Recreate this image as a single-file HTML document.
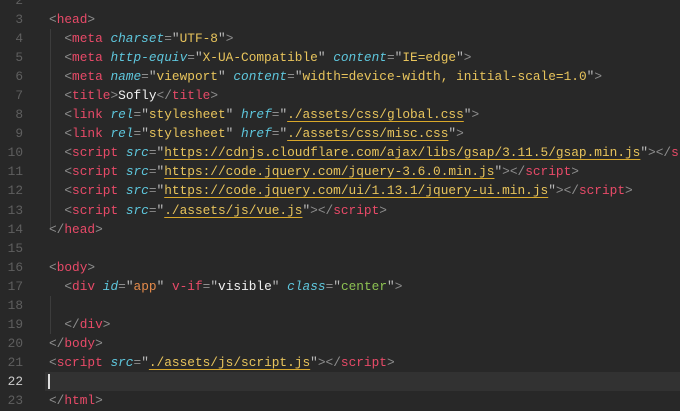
<!DOCTYPE html>
<html><head><meta charset="utf-8"><style>
html,body{margin:0;padding:0;background:#282828;width:680px;height:411px;overflow:hidden}
.wrap{position:absolute;left:0;top:-9px;width:680px;overflow:hidden}
.l{height:19.05px;line-height:19.05px;font-family:"Liberation Mono",monospace;font-size:12.8px;white-space:pre;position:relative;color:#ddd;overflow:hidden}
.n{position:absolute;left:0;width:23px;text-align:right;color:#5f5f5f}
.c{position:absolute;left:49px}
.t{color:#e84a68}.p{color:#8e8e8e}.a{color:#5ec6dc;font-style:italic}.s{color:#e8c45c}.q{color:#bbb}
.u{text-decoration:underline;text-decoration-color:#d9a82a;text-underline-offset:3px}
.o{color:#e48a4a}.w{color:#f2f2f2}.g{color:#8cc152}
.cur{background:#323232}
.guide{position:absolute;left:50px;width:1px;background:#3c3c3c}
</style></head><body>
<div class="guide" style="top:29px;height:200px"></div>
<div class="guide" style="top:296px;height:38px"></div>
<div class="wrap">
<div class="l"><span class="n">2</span></div>
<div class="l"><span class="n">3</span><span class="c"><span class="p">&lt;</span><span class="t">head</span><span class="p">&gt;</span></span></div>
<div class="l"><span class="n">4</span><span class="c">  <span class="p">&lt;</span><span class="t">meta</span> <span class="a">charset</span><span class="p">=</span><span class="q">"</span><span class="s">UTF-8</span><span class="q">"</span><span class="p">&gt;</span></span></div>
<div class="l"><span class="n">5</span><span class="c">  <span class="p">&lt;</span><span class="t">meta</span> <span class="a">http-equiv</span><span class="p">=</span><span class="q">"</span><span class="s">X-UA-Compatible</span><span class="q">"</span> <span class="a">content</span><span class="p">=</span><span class="q">"</span><span class="s">IE=edge</span><span class="q">"</span><span class="p">&gt;</span></span></div>
<div class="l"><span class="n">6</span><span class="c">  <span class="p">&lt;</span><span class="t">meta</span> <span class="a">name</span><span class="p">=</span><span class="q">"</span><span class="s">viewport</span><span class="q">"</span> <span class="a">content</span><span class="p">=</span><span class="q">"</span><span class="s">width=device-width, initial-scale=1.0</span><span class="q">"</span><span class="p">&gt;</span></span></div>
<div class="l"><span class="n">7</span><span class="c">  <span class="p">&lt;</span><span class="t">title</span><span class="p">&gt;</span><span class="w">Sofly</span><span class="p">&lt;/</span><span class="t">title</span><span class="p">&gt;</span></span></div>
<div class="l"><span class="n">8</span><span class="c">  <span class="p">&lt;</span><span class="t">link</span> <span class="a">rel</span><span class="p">=</span><span class="q">"</span><span class="s">stylesheet</span><span class="q">"</span> <span class="a">href</span><span class="p">=</span><span class="q">"</span><span class="s u">./assets/css/global.css</span><span class="q">"</span><span class="p">&gt;</span></span></div>
<div class="l"><span class="n">9</span><span class="c">  <span class="p">&lt;</span><span class="t">link</span> <span class="a">rel</span><span class="p">=</span><span class="q">"</span><span class="s">stylesheet</span><span class="q">"</span> <span class="a">href</span><span class="p">=</span><span class="q">"</span><span class="s u">./assets/css/misc.css</span><span class="q">"</span><span class="p">&gt;</span></span></div>
<div class="l"><span class="n">10</span><span class="c">  <span class="p">&lt;</span><span class="t">script</span> <span class="a">src</span><span class="p">=</span><span class="q">"</span><span class="s u">https://cdnjs.cloudflare.com/ajax/libs/gsap/3.11.5/gsap.min.js</span><span class="q">"</span><span class="p">&gt;&lt;/</span><span class="t">s</span></span></div>
<div class="l"><span class="n">11</span><span class="c">  <span class="p">&lt;</span><span class="t">script</span> <span class="a">src</span><span class="p">=</span><span class="q">"</span><span class="s u">https://code.jquery.com/jquery-3.6.0.min.js</span><span class="q">"</span><span class="p">&gt;&lt;/</span><span class="t">script</span><span class="p">&gt;</span></span></div>
<div class="l"><span class="n">12</span><span class="c">  <span class="p">&lt;</span><span class="t">script</span> <span class="a">src</span><span class="p">=</span><span class="q">"</span><span class="s u">https://code.jquery.com/ui/1.13.1/jquery-ui.min.js</span><span class="q">"</span><span class="p">&gt;&lt;/</span><span class="t">script</span><span class="p">&gt;</span></span></div>
<div class="l"><span class="n">13</span><span class="c">  <span class="p">&lt;</span><span class="t">script</span> <span class="a">src</span><span class="p">=</span><span class="q">"</span><span class="s u">./assets/js/vue.js</span><span class="q">"</span><span class="p">&gt;&lt;/</span><span class="t">script</span><span class="p">&gt;</span></span></div>
<div class="l"><span class="n">14</span><span class="c"><span class="p">&lt;/</span><span class="t">head</span><span class="p">&gt;</span></span></div>
<div class="l"><span class="n">15</span></div>
<div class="l"><span class="n">16</span><span class="c"><span class="p">&lt;</span><span class="t">body</span><span class="p">&gt;</span></span></div>
<div class="l"><span class="n">17</span><span class="c">  <span class="p">&lt;</span><span class="t">div</span> <span class="a">id</span><span class="p">=</span><span class="q">"</span><span class="o">app</span><span class="q">"</span> <span class="t">v-if</span><span class="p">=</span><span class="q">"</span><span class="w">visible</span><span class="q">"</span> <span class="a">class</span><span class="p">=</span><span class="q">"</span><span class="g">center</span><span class="q">"</span><span class="p">&gt;</span></span></div>
<div class="l"><span class="n">18</span></div>
<div class="l"><span class="n">19</span><span class="c">  <span class="p">&lt;/</span><span class="t">div</span><span class="p">&gt;</span></span></div>
<div class="l"><span class="n">20</span><span class="c"><span class="p">&lt;/</span><span class="t">body</span><span class="p">&gt;</span></span></div>
<div class="l"><span class="n">21</span><span class="c"><span class="p">&lt;</span><span class="t">script</span> <span class="a">src</span><span class="p">=</span><span class="q">"</span><span class="s u">./assets/js/script.js</span><span class="q">"</span><span class="p">&gt;&lt;/</span><span class="t">script</span><span class="p">&gt;</span></span></div>
<div class="l"><span class="cur" style="position:absolute;left:45px;right:0;top:0;bottom:0"></span><span class="n" style="color:#ccc">22</span><span style="position:absolute;left:48px;top:2px;width:2px;height:15px;background:#ddd"></span></div>
<div class="l"><span class="n">23</span><span class="c"><span class="p">&lt;/</span><span class="t">html</span><span class="p">&gt;</span></span></div>
</div>
</body></html>
